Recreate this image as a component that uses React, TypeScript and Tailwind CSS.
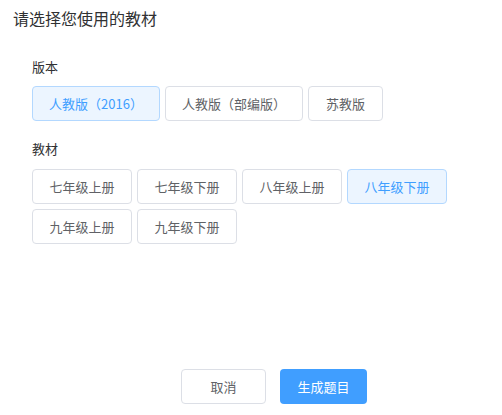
import React, { useState } from "react";

const font = { fontFamily: '"Noto Sans CJK SC", "Noto Sans", sans-serif' };

function Btn({ label, active, w, onClick }: { label: string; active: boolean; w: string; onClick: () => void }) {
  return (
    <button
      onClick={onClick}
      className={
        "h-[35px] rounded-[4px] border text-[13px] flex items-center justify-center [text-spacing-trim:space-all] " +
        w +
        " " +
        (active
          ? "border-[#b3d8ff] bg-[#ecf5ff] text-[#409eff]"
          : "border-[#dcdfe6] bg-white text-[#606266]")
      }
    >
      {label}
    </button>
  );
}

export default function App() {
  const [ver, setVer] = useState(0);
  const [book, setBook] = useState(3);
  const versions = [
    { l: "人教版（2016）", w: "w-[128px]" },
    { l: "人教版（部编版）", w: "w-[138px]" },
    { l: "苏教版", w: "w-[75px]" },
  ];
  const books = ["七年级上册", "七年级下册", "八年级上册", "八年级下册", "九年级上册", "九年级下册"];
  return (
    <div style={font} className="w-[502px] h-[415px] bg-white flex flex-col">
      <div className="pl-[13px] pt-[6px] text-[16px] leading-[24px] text-[#303133]">请选择您使用的教材</div>
      <div className="pl-[32px] flex flex-col">
        <div className="mt-[28px] text-[13px] leading-[18px] text-[#303133]">版本</div>
        <div className="mt-[10px] flex gap-[5px]">
          {versions.map((v, i) => (
            <Btn key={v.l} label={v.l} w={v.w} active={ver === i} onClick={() => setVer(i)} />
          ))}
        </div>
        <div className="mt-[19px] text-[13px] leading-[18px] text-[#303133]">教材</div>
        <div className="mt-[11px] grid grid-cols-[repeat(4,100px)] gap-[5px]">
          {books.map((b, i) => (
            <Btn key={b} label={b} w="w-[100px]" active={book === i} onClick={() => setBook(i)} />
          ))}
        </div>
      </div>
      <div className="mt-auto mb-[11px] pl-[181px] flex gap-[14px]">
        <button className="w-[85px] h-[35px] rounded-[4px] border border-[#dcdfe6] bg-white text-[13px] text-[#606266]">
          取消
        </button>
        <button className="w-[87px] h-[35px] rounded-[4px] bg-[#409eff] text-[13px] text-white">生成题目</button>
      </div>
    </div>
  );
}
